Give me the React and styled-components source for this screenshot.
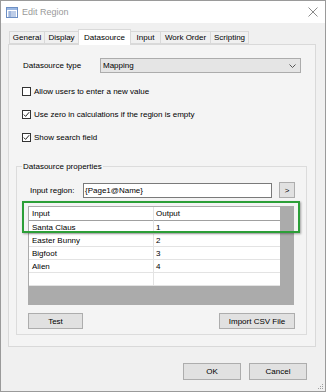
import React from "react";
import styled, { createGlobalStyle } from "styled-components";

const GlobalStyle = createGlobalStyle`
  html, body { margin: 0; padding: 0; background: #ffffff; }
  body {
    font-family: "Liberation Sans", Arial, sans-serif;
    font-size: 8px;
    color: #000;
  }
`;

const Window = styled.div`
  position: relative;
  width: 326px;
  height: 392px;
  box-sizing: border-box;
  border: 1px solid #9a9a9a;
  background: #f0f0f0;
  display: flex;
  flex-direction: column;
`;

const TitleBar = styled.div`
  height: 22px;
  background: #ffffff;
  display: flex;
  align-items: center;
  gap: 4px;
  padding: 0 7px 0 5px;
  font-size: 9px;
  color: #9a9a9a;
`;

const Close = styled.div`
  margin-left: auto;
  display: flex;
`;

const Content = styled.div`
  padding: 6px 0 0 7px;
`;

const TabStrip = styled.div`
  display: flex;
  align-items: flex-end;
  height: 15px;
  padding-left: 1px;
  position: relative;
  z-index: 1;
`;

const Tab = styled.div`
  box-sizing: border-box;
  width: ${p => p.w}px;
  height: ${p => (p.active ? 16 : 13)}px;
  margin-right: -1px;
  margin-bottom: ${p => (p.active ? -1 : 0)}px;
  border: 1px solid #d9d9d9;
  border-bottom: ${p => (p.active ? "none" : "1px solid #d9d9d9")};
  background: ${p => (p.active ? "#ffffff" : "#f0f0f0")};
  position: relative;
  z-index: ${p => (p.active ? 2 : 1)};
  display: flex;
  align-items: center;
  justify-content: center;
  padding-bottom: ${p => (p.active ? 1 : 0)}px;
`;

const Panel = styled.div`
  box-sizing: border-box;
  width: 308px;
  height: 303px;
  border: 1px solid #d9d9d9;
  background: #f4f4f4;
  padding: 13px 8px 0 7px;
  display: flex;
  flex-direction: column;
`;

const TypeRow = styled.div`
  display: flex;
  align-items: center;
  height: 15px;
  margin-left: 7px;
`;

const FieldLabel = styled.span`
  width: ${p => p.w}px;
  flex: none;
`;

const Select = styled.div`
  box-sizing: border-box;
  width: 201px;
  height: 15px;
  background: #e5e5e5;
  border: 1px solid #acacac;
  display: flex;
  align-items: center;
  justify-content: space-between;
  padding: 0 4px 0 2px;
`;

const CheckRow = styled.label`
  display: flex;
  align-items: center;
  gap: 3px;
  height: 9px;
  margin: 14px 0 0 6px;
`;

const Box = styled.span`
  box-sizing: border-box;
  width: 9px;
  height: 9px;
  border: 1px solid #333;
  background: #fff;
  display: flex;
`;

const GroupBox = styled.fieldset`
  margin: 20px 0 0 0;
  padding: 0;
  width: 291px;
  box-sizing: border-box;
  border: 1px solid #dcdcdc;
  min-inline-size: 0;
`;

const Legend = styled.legend`
  margin-left: 5px;
  padding: 0 1px;
  line-height: 9px;
  font-size: 8px;
`;

const GroupInner = styled.div`
  padding: 11px 11px 5px 11px;
  display: flex;
  flex-direction: column;
`;

const InputRow = styled.div`
  display: flex;
  align-items: center;
  height: 16px;
  padding-left: 2px;
`;

const TextInput = styled.div`
  box-sizing: border-box;
  width: 189px;
  height: 15px;
  border: 1px solid #7a7a7a;
  background: #fff;
  display: flex;
  align-items: center;
  padding-left: 1px;
`;

const Button = styled.div`
  box-sizing: border-box;
  width: ${p => p.w}px;
  height: ${p => p.h || 16}px;
  background: #e1e1e1;
  border: 1px solid #adadad;
  display: flex;
  align-items: center;
  justify-content: center;
  margin-left: ${p => p.ml || 0}px;
`;

const GridWrap = styled.div`
  position: relative;
  margin-top: 8px;
`;

const Grid = styled.div`
  box-sizing: border-box;
  width: 266px;
  height: 99px;
  background: #ababab;
  padding: 1px;
`;

const Table = styled.div`
  display: grid;
  grid-template-columns: 125px 126px;
  background: #fff;
  width: 251px;
`;

const Cell = styled.div`
  box-sizing: border-box;
  display: flex;
  align-items: center;
  padding-left: ${p => (p.first ? 3 : 2)}px;
  border-bottom: 1px solid ${p => (p.head ? "#a0a0a0" : "#e3e3e3")};
  border-right: ${p => (p.first ? "1px solid #e3e3e3" : "none")};
  height: ${p => (p.head ? 14 : 13)}px;
`;

const Highlight = styled.div`
  position: absolute;
  left: -6px;
  top: -5px;
  width: 278px;
  height: 32px;
  box-sizing: border-box;
  border: 2px solid #2c9f38;
  box-shadow: 1px 1px 2px rgba(0, 0, 0, 0.35);
  pointer-events: none;
`;

const ButtonRow = styled.div`
  display: flex;
  justify-content: space-between;
  margin-top: 8px;
`;

const Footer = styled.div`
  display: flex;
  justify-content: flex-end;
  gap: 8px;
  padding: 16px 18px 0 0;
`;

const Grip = styled.div`
  position: absolute;
  right: 1px;
  bottom: 1px;
  display: flex;
`;

const rows = [
  ["Santa Claus", "1"],
  ["Easter Bunny", "2"],
  ["Bigfoot", "3"],
  ["Alien", "4"],
  ["", ""],
];

const tabs = [
  ["General", 36],
  ["Display", 35],
  ["Datasource", 53],
  ["Input", 31],
  ["Work Order", 51],
  ["Scripting", 39],
];

function Check({ checked }) {
  return (
    <Box>
      {checked && (
        <svg width="7" height="7" viewBox="0 0 7 7">
          <path d="M0.8 3.6 L2.6 5.4 L6.2 1.2" fill="none" stroke="#222" strokeWidth="1" />
        </svg>
      )}
    </Box>
  );
}

export default function App() {
  return (
    <>
      <GlobalStyle />
      <Window>
        <TitleBar>
          <svg width="12" height="11" viewBox="0 0 12 11">
            <rect x="0.5" y="0.5" width="11" height="10" fill="#fff" stroke="#6d8fc4" />
            <rect x="1" y="1" width="10" height="2" fill="#9bb8e3" />
            <path d="M2 5 H10 M2 7 H10 M2 9 H10" stroke="#7c9bd0" strokeWidth="1" />
            <path d="M4 4 V10" stroke="#7c9bd0" strokeWidth="1" />
          </svg>
          <span>Edit Region</span>
          <Close>
            <svg width="10" height="10" viewBox="0 0 10 10">
              <path d="M0.5 0.5 L9.5 9.5 M9.5 0.5 L0.5 9.5" stroke="#8a8a8a" strokeWidth="1" />
            </svg>
          </Close>
        </TitleBar>
        <Content>
          <TabStrip>
            {tabs.map(([name, w]) => (
              <Tab key={name} w={w} active={name === "Datasource"}>
                {name}
              </Tab>
            ))}
          </TabStrip>
          <Panel>
            <TypeRow>
              <FieldLabel w={77}>Datasource type</FieldLabel>
              <Select>
                <span>Mapping</span>
                <svg width="7" height="4" viewBox="0 0 7 4">
                  <path d="M0.5 0.5 L3.5 3.5 L6.5 0.5" fill="none" stroke="#555" strokeWidth="1" />
                </svg>
              </Select>
            </TypeRow>
            <CheckRow>
              <Check />
              <span>Allow users to enter a new value</span>
            </CheckRow>
            <CheckRow>
              <Check checked />
              <span>Use zero in calculations if the region is empty</span>
            </CheckRow>
            <CheckRow>
              <Check checked />
              <span>Show search field</span>
            </CheckRow>
            <GroupBox>
              <Legend>Datasource properties</Legend>
              <GroupInner>
                <InputRow>
                  <FieldLabel w={53}>Input region:</FieldLabel>
                  <TextInput>{"{Page1@Name}"}</TextInput>
                  <Button w={16} ml={7}>&gt;</Button>
                </InputRow>
                <GridWrap>
                  <Grid>
                    <Table>
                      <Cell head first>Input</Cell>
                      <Cell head>Output</Cell>
                      {rows.map(([a, b], i) => (
                        <React.Fragment key={i}>
                          <Cell first>{a}</Cell>
                          <Cell>{b}</Cell>
                        </React.Fragment>
                      ))}
                    </Table>
                  </Grid>
                  <Highlight />
                </GridWrap>
                <ButtonRow>
                  <Button w={55}>Test</Button>
                  <Button w={76}>Import CSV File</Button>
                </ButtonRow>
              </GroupInner>
            </GroupBox>
          </Panel>
        </Content>
        <Footer>
          <Button w={58} h={17}>OK</Button>
          <Button w={58} h={17}>Cancel</Button>
        </Footer>
        <Grip>
          <svg width="6" height="6" viewBox="0 0 6 6" fill="#a0a0a0">
            <rect x="4" y="0" width="1" height="1" />
            <rect x="2" y="2" width="1" height="1" />
            <rect x="4" y="2" width="1" height="1" />
            <rect x="0" y="4" width="1" height="1" />
            <rect x="2" y="4" width="1" height="1" />
            <rect x="4" y="4" width="1" height="1" />
          </svg>
        </Grip>
      </Window>
    </>
  );
}
